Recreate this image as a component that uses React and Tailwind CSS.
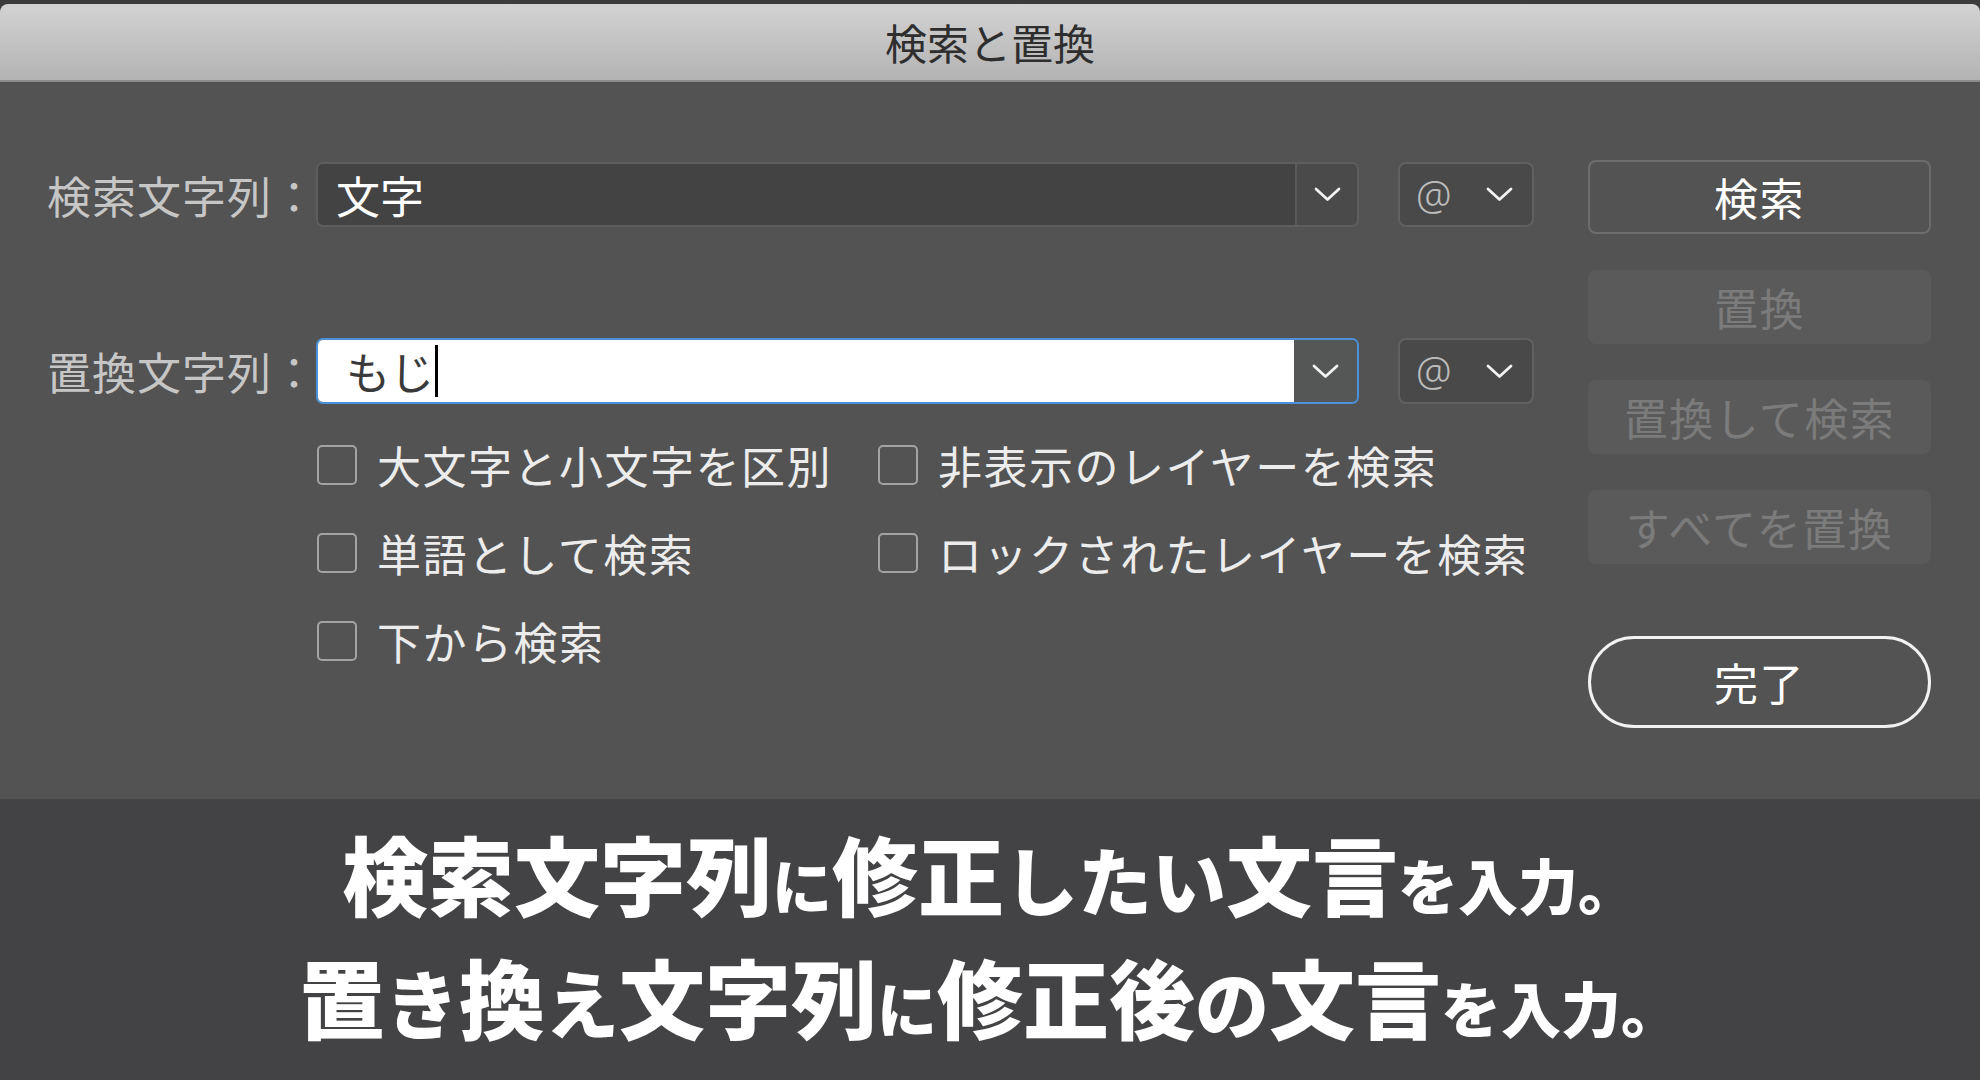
import React from 'react';

const jp = { fontFamily: '"Noto Sans CJK JP", "Noto Sans", sans-serif' };

function Chevron() {
  return (
    <svg width="27" height="15" viewBox="0 0 27 15" fill="none">
      <polyline points="2,2 13.5,12.5 25,2" stroke="#f2f2f2" strokeWidth="2.8" strokeLinecap="round" strokeLinejoin="round" />
    </svg>
  );
}

function AtBox() {
  return (
    <div className="ml-[39px] flex h-full w-[136px] shrink-0 items-center rounded-[8px] border-2 border-[#616161] bg-[#494949] pl-[16px]">
      <span className="text-[40px] font-light leading-none text-[#bdbdbd]" style={{ fontFamily: '"Noto Sans", sans-serif' }}>@</span>
      <span className="ml-[34px] flex items-center">
        <Chevron />
      </span>
    </div>
  );
}

function Check({ label }) {
  return (
    <div className="flex h-[88px] items-center">
      <span className="h-[40px] w-[40px] shrink-0 rounded-[5px] border-2 border-[#a3a3a3]" />
      <span className="ml-[20px] whitespace-nowrap text-[44px] leading-none tracking-[1.5px] text-[#ececec]">{label}</span>
    </div>
  );
}

function SideButton({ children, disabled }) {
  if (disabled) {
    return (
      <div className="flex h-[74px] w-[343px] items-center justify-center rounded-[8px] bg-[#5a5a5a] text-[44px] leading-none tracking-[1.5px] text-[#7b7b7b]">
        {children}
      </div>
    );
  }
  return (
    <div className="flex h-[74px] w-[343px] items-center justify-center rounded-[8px] border-2 border-[#6d6d6d] text-[44px] leading-none tracking-[1.5px] text-white">
      {children}
    </div>
  );
}

export default function App() {
  return (
    <div className="flex h-[1080px] w-[1980px] flex-col overflow-hidden bg-[#3b3b3b]" style={jp}>
      {/* title bar */}
      <div className="mt-[4px] flex h-[78px] shrink-0 items-center justify-center rounded-t-[8px] border-b-2 border-[#8c8c8c] bg-gradient-to-b from-[#d3d3d3] to-[#b3b3b3]">
        <span className="text-[42px] leading-none text-[#2e2e2e]">検索と置換</span>
      </div>

      {/* dialog body */}
      <div className="flex h-[717px] shrink-0 bg-[#535353] pl-[47px] pt-[78px]">
        <div className="flex flex-col pt-[2px]">
          <div className="flex h-[65px] items-center">
            <span className="w-[269px] shrink-0 whitespace-nowrap text-[44px] leading-none tracking-[1px] text-[#c6c6c6]">検索文字列：</span>
            <div className="flex h-full w-[1043px] shrink-0 overflow-hidden rounded-[7px] border-2 border-[#5e5e5e]">
              <div className="flex flex-1 items-center bg-[#434344] pl-[18px] text-[44px] leading-none text-white">文字</div>
              <div className="flex w-[62px] items-center justify-center border-l-2 border-[#5a5a5a] bg-[#4a4a4a]">
                <Chevron />
              </div>
            </div>
            <AtBox />
          </div>

          <div className="mt-[111px] flex h-[66px] items-center">
            <span className="w-[269px] shrink-0 whitespace-nowrap text-[44px] leading-none tracking-[1px] text-[#c6c6c6]">置換文字列：</span>
            <div className="flex h-full w-[1043px] shrink-0 overflow-hidden rounded-[7px] border-2 border-[#4a92db]">
              <div className="flex flex-1 items-center bg-white pl-[28px] text-[44px] leading-none text-[#3a3a3a]">
                もじ
                <span className="ml-[1px] h-[52px] w-[3px] bg-black" />
              </div>
              <div className="flex w-[63px] items-center justify-center bg-[#555756]">
                <Chevron />
              </div>
            </div>
            <AtBox />
          </div>

          <div className="ml-[270px] mt-[17px] grid grid-cols-[561px_auto]">
            <Check label="大文字と小文字を区別" />
            <Check label="非表示のレイヤーを検索" />
            <Check label="単語として検索" />
            <Check label="ロックされたレイヤーを検索" />
            <Check label="下から検索" />
          </div>
        </div>

        <div className="ml-[54px] flex shrink-0 flex-col gap-[36px]">
          <SideButton>検索</SideButton>
          <SideButton disabled>置換</SideButton>
          <SideButton disabled>置換して検索</SideButton>
          <SideButton disabled>すべてを置換</SideButton>
          <div className="mt-[36px] flex h-[92px] w-[343px] items-center justify-center rounded-full border-[3px] border-[#f2f2f2] text-[44px] leading-none tracking-[1.5px] text-white">
            完了
          </div>
        </div>
      </div>

      {/* caption */}
      <div className="flex flex-1 flex-col items-center overflow-hidden bg-[#434345] pt-[12px] font-black text-white">
        <p className="whitespace-nowrap text-[86px] leading-[123px]">
          検索文字列<span className="text-[60px] leading-none">に</span>修正<span className="text-[74px] leading-none">したい</span>文言<span className="text-[60px] leading-none">を入力。</span>
        </p>
        <p className="whitespace-nowrap text-[86px] leading-[123px]">
          置<span className="text-[74px] leading-none">き</span>換<span className="text-[74px] leading-none">え</span>文字列<span className="text-[60px] leading-none">に</span>修正後<span className="text-[74px] leading-none">の</span>文言<span className="text-[60px] leading-none">を入力。</span>
        </p>
      </div>
    </div>
  );
}
